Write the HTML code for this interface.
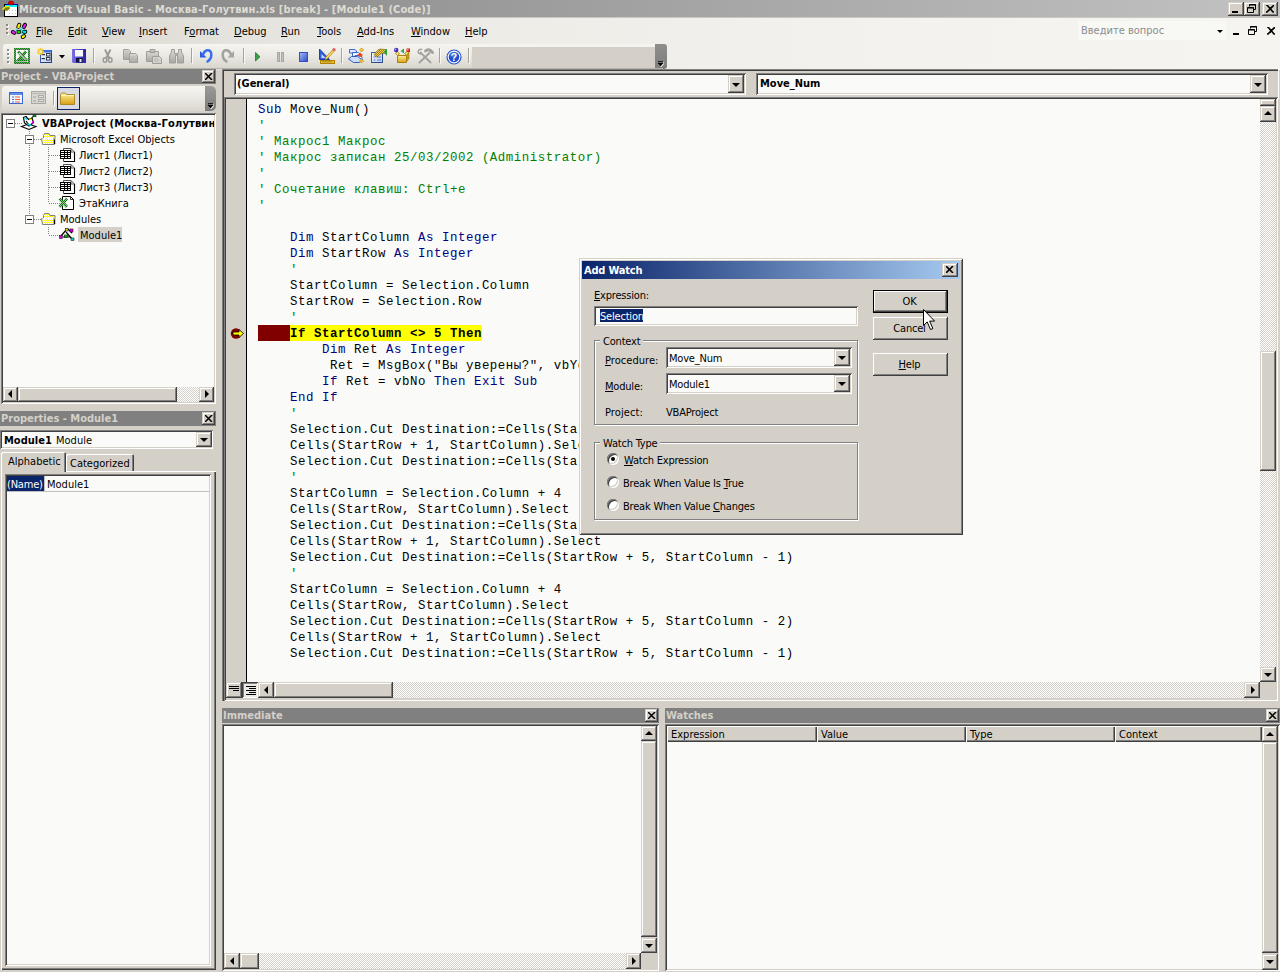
<!DOCTYPE html>
<html><head><meta charset="utf-8"><title>Microsoft Visual Basic</title>
<style>
*{box-sizing:border-box;margin:0;padding:0}
html,body{width:1280px;height:972px;overflow:hidden;background:#d4d0c8}
body{font:11px "DejaVu Sans Condensed","Liberation Sans",sans-serif;color:#000;position:relative;cursor:default}
.a{position:absolute}
.t{position:absolute;white-space:nowrap;line-height:13px;margin-top:1px}
.b{font-weight:bold}
u{text-decoration:underline;text-underline-offset:1px}
.sunken{box-shadow:inset 1px 1px #808080,inset -1px -1px #fff,inset 2px 2px #404040,inset -2px -2px #d4d0c8}
.raised{background:#d4d0c8;box-shadow:inset -1px -1px #404040,inset 1px 1px #d4d0c8,inset -2px -2px #808080,inset 2px 2px #fff}
.win{background:#fafbf8}
.dither{background-color:#e9e8e2;background-image:conic-gradient(#fff 25%,#d4d0c8 0 50%,#fff 0 75%,#d4d0c8 0);background-size:2px 2px}
.cap{background:#808080;color:#d4d0c8;font-weight:bold;height:15px}
.arr{position:absolute;width:0;height:0;border:4px solid transparent}
.code{font:12.4px/16px "Liberation Mono",monospace;letter-spacing:.56px;white-space:pre;position:absolute;left:258px;color:#000}
.k{color:#000080}.c{color:#008000}
.btn{background:#d4d0c8;box-shadow:inset -1px -1px #404040,inset 1px 1px #fff,inset -2px -2px #808080,inset 2px 2px #d4d0c8}
.hd{top:726px;height:16px;background:#d4d0c8;box-shadow:inset 1px 1px #fff,inset -1px -1px #404040,inset -2px -2px #808080}
.fr{border:1px solid #808080;box-shadow:1px 1px #fff,inset 1px 1px #fff}
.rd{width:12px;height:12px;border-radius:50%;background:#fff;box-shadow:inset 1px 1px 0 #808080,inset -1px -1px 0 #fff,inset 2px 2px 0 #404040,inset -2px -2px 0 #d4d0c8}
.rd i{position:absolute;left:4px;top:4px;width:4px;height:4px;border-radius:50%;background:#000}
</style></head><body>
<!--TITLE-->
<div class="a" style="left:0;top:0;width:1280px;height:18px;background:linear-gradient(90deg,#828282,#c2c2c2)"></div>
<div class="a" style="left:0;top:17px;width:1280px;height:1px;background:#c9c7c1"></div>
<svg class="a" style="left:2px;top:0" width="18" height="18" viewBox="0 0 18 18"><rect x="2.5" y="4.5" width="13" height="12" fill="#fff" stroke="#000"/><rect x="3" y="5" width="12" height="2" fill="#00ffff"/><rect x="4" y="4" width="12" height="1" fill="#0000c0"/><path d="M6 2.5l2-1.5 3 .5 1 2-2 1.5-3-.5z" fill="#e00000" stroke="#800000" stroke-width=".6"/><path d="M1 10l2-3 4-.5 1 2-3 2.5-2-.5z" fill="#808000"/><path d="M.5 9.5l2.500-2.500 4-.5" stroke="#ffff00" stroke-width="1.200" fill="none"/><g fill="#c0c0c0"><rect x="7" y="10" width="1" height="1"/><rect x="10" y="10" width="1" height="1"/><rect x="13" y="10" width="1" height="1"/><rect x="7" y="13" width="1" height="1"/><rect x="10" y="13" width="1" height="1"/><rect x="13" y="13" width="1" height="1"/></g></svg>
<div class="t b" style="left:19px;top:2px;color:#dedbd3;letter-spacing:.1px">Microsoft Visual Basic - Москва-Голутвин.xls [break] - [Module1 (Code)]</div>
<div class="a raised" style="left:1228px;top:2px;width:16px;height:14px"><div class="a" style="left:4px;top:9px;width:6px;height:2px;background:#000"></div></div>
<div class="a raised" style="left:1244px;top:2px;width:16px;height:14px"><svg class="a" style="left:3px;top:2px" width="10" height="10"><path d="M2.500 2.500V.5h6v2M2.500 1h6M8.500 .5v5h-2M.5 3.500h6v5h-6zM.5 4h6" stroke="#000" fill="none"/></svg></div>
<div class="a raised" style="left:1262px;top:2px;width:16px;height:14px"><svg class="a" style="left:4px;top:3px" width="8" height="8"><path d="M0 0l1 0 6 7h1M7 0h1l-7 7h-1" stroke="#000" stroke-width="1.600" fill="none"/></svg></div>
<!--MENU-->
<div class="a" style="left:0;top:18px;width:1280px;height:52px;background:linear-gradient(90deg,#d8d5cd 0,#e5e3dd 18%,#eeede8 42%,#f3f2ee 70%,#f5f4f1 100%)"></div>
<div class="a" style="left:7px;top:25px;width:2px;height:2px;background:#fff;box-shadow:0 4px #fff,0 8px #fff"></div><div class="a" style="left:6px;top:24px;width:2px;height:2px;background:#868682;box-shadow:0 4px #868682,0 8px #868682"></div>
<svg class="a" style="left:10px;top:22px" width="18" height="18" viewBox="10 22 18 18"><g stroke="#000" stroke-width="4" stroke-linecap="round"><path d="M18.300 27l1-2.200M23.800 27l1.200-2.200M12.800 32l1.500.8M22.800 37l1.300-.9M23.800 31.800h1.500"/></g><g stroke="#00d8e8" stroke-width="1.300" stroke-dasharray="1 .7"><path d="M18 28.500l-3.500 3M20 29l3 6.500M21 29.500l2.500 2M19 28h4"/></g><g stroke-width="2.200" stroke-linecap="round"><path d="M18.300 27l1-2.200M22.800 37l1.300-.9" stroke="#fff000"/><path d="M23.800 27l1.200-2.200M12.800 32l1.500.8" stroke="#e818e8"/><path d="M23.800 31.800h1.500" stroke="#00e0f0"/></g><rect x="17" y="30.500" width="3.500" height="3" fill="#00d800" stroke="#000" stroke-width=".7"/></svg>
<div class="t" style="left:36px;top:24px"><u>F</u>ile</div>
<div class="t" style="left:68px;top:24px"><u>E</u>dit</div>
<div class="t" style="left:102px;top:24px"><u>V</u>iew</div>
<div class="t" style="left:139px;top:24px"><u>I</u>nsert</div>
<div class="t" style="left:184px;top:24px">F<u>o</u>rmat</div>
<div class="t" style="left:234px;top:24px"><u>D</u>ebug</div>
<div class="t" style="left:281px;top:24px"><u>R</u>un</div>
<div class="t" style="left:317px;top:24px"><u>T</u>ools</div>
<div class="t" style="left:357px;top:24px"><u>A</u>dd-Ins</div>
<div class="t" style="left:411px;top:24px"><u>W</u>indow</div>
<div class="t" style="left:465px;top:24px"><u>H</u>elp</div>
<div class="a" style="left:1078px;top:21px;width:148px;height:19px;background:#f8f9f5"></div>
<div class="t" style="left:1081px;top:23px;color:#8c8c8c">Введите вопрос</div>
<div class="arr" style="left:1217px;top:30px;border-width:3px;border-top:3px solid #000"></div>
<div class="a" style="left:1233px;top:33px;width:6px;height:2px;background:#000"></div>
<svg class="a" style="left:1248px;top:26px" width="10" height="10"><path d="M2.500 2.500V.5h6v2M2.500 1h6M8.500 .5v5h-2M.5 3.500h6v5h-6zM.5 4h6" stroke="#000" fill="none"/></svg>
<svg class="a" style="left:1267px;top:27px" width="8" height="8"><path d="M0 0l1 0 6 7h1M7 0h1l-7 7h-1" stroke="#000" stroke-width="1.600" fill="none"/></svg>
<!--TOOLBAR-->
<div class="a" style="left:3px;top:44px;width:664px;height:24px;border-radius:3px 5px 5px 3px;background:linear-gradient(180deg,#f6f5f1 0,#eceae4 45%,#d9d6ce 100%)"></div>
<div class="a" style="left:472px;top:47px;width:186px;height:22px;background:#d4d0c8"></div>
<div class="a" style="left:655px;top:44px;width:12px;height:25px;border-radius:0 3px 3px 0;background:linear-gradient(180deg,#8e8e8c,#7e7e7c)"></div>
<div class="a" style="left:3px;top:68px;width:660px;height:1px;background:#b5b2aa"></div>
<svg class="a" style="left:0;top:44px" width="680" height="26" viewBox="0 0 680 26">
<defs>
<linearGradient id="gb" x1="0" y1="0" x2="1" y2="1"><stop offset="0" stop-color="#a8c0f8"/><stop offset="1" stop-color="#2848c8"/></linearGradient>
<linearGradient id="gy" x1="0" y1="0" x2="0" y2="1"><stop offset="0" stop-color="#fff0a0"/><stop offset="1" stop-color="#d8a010"/></linearGradient>
<pattern id="chk" width="2" height="2" patternUnits="userSpaceOnUse"><rect width="2" height="2" fill="#0a7f0a"/><rect x="1" width="1" height="1" fill="#7d9a7d"/><rect y="1" width="1" height="1" fill="#7d9a7d"/></pattern>
<pattern id="hc" width="2" height="2" patternUnits="userSpaceOnUse"><rect width="2" height="2" fill="#f4d040"/><rect x="1" width="1" height="1" fill="#a08020"/><rect y="1" width="1" height="1" fill="#a08020"/></pattern>
<linearGradient id="gw" x1="0" y1="0" x2="1" y2="1"><stop offset="0" stop-color="#fff"/><stop offset="1" stop-color="#b8cef4"/></linearGradient>
<linearGradient id="gs" x1="0" y1="0" x2="1" y2="0"><stop offset="0" stop-color="#7a70e8"/><stop offset=".5" stop-color="#5048c8"/><stop offset="1" stop-color="#2c249c"/></linearGradient>
<linearGradient id="gg" x1="0" y1="0" x2="0" y2="1"><stop offset="0" stop-color="#dcdad4"/><stop offset="1" stop-color="#a8a6a0"/></linearGradient>
</defs>
<g fill="#8e8e8a"><rect x="7" y="5" width="2" height="2"/><rect x="7" y="9" width="2" height="2"/><rect x="7" y="13" width="2" height="2"/><rect x="7" y="17" width="2" height="2"/></g>
<g fill="#fff"><rect x="8" y="6" width="2" height="2"/><rect x="8" y="10" width="2" height="2"/><rect x="8" y="14" width="2" height="2"/><rect x="8" y="18" width="2" height="2"/></g>
<g fill="#8e8e8a"><rect x="7" y="5" width="2" height="2"/><rect x="7" y="9" width="2" height="2"/><rect x="7" y="13" width="2" height="2"/><rect x="7" y="17" width="2" height="2"/></g>
<!-- excel -->
<rect x="15" y="5" width="14" height="14" fill="#f6f8f4" stroke="url(#chk)" stroke-width="2"/>
<path d="M18 7.500l8 8.500M26 7.500l-7.500 8.500h9" stroke="url(#chk)" stroke-width="2.800" fill="none"/>
<path d="M19 9l6.500 7" stroke="#f6f8f4" stroke-width=".9"/>
<!-- userform -->
<rect x="40.500" y="6.500" width="11" height="12" fill="url(#gw)" stroke="#3a5ca8"/>
<path d="M41 18.500h10.500v-12" stroke="#24407c" fill="none"/>
<rect x="41" y="6" width="10.500" height="2.500" fill="#3f72e0"/>
<rect x="41.500" y="10" width="3.500" height="1.200" fill="#283040"/><rect x="46.500" y="9.500" width="3.500" height="2.500" fill="#f4f6fa" stroke="#303844" stroke-width="1"/>
<rect x="41.500" y="14" width="3.500" height="1.200" fill="#283040"/><rect x="46.500" y="13.500" width="3.500" height="2.500" fill="#f4f6fa" stroke="#303844" stroke-width="1"/>
<path d="M40.500 4v7M37 7.500h7M38 5l5 5M43 5l-5 5" stroke="#f2c832" stroke-width="1.500"/><rect x="39.500" y="6.500" width="2" height="2" fill="#fffbe0"/>
<path d="M59 11h6l-3 3.500z" fill="#000"/>
<!-- save -->
<path d="M72 5h14v14h-13l-1-1z" fill="url(#gs)"/>
<rect x="75" y="6" width="8" height="6.500" fill="#f6f8fc"/><rect x="76" y="14" width="6.500" height="4.500" fill="#14143c"/><rect x="79.500" y="15" width="2" height="3" fill="#e8ecf8"/><rect x="84" y="6.500" width="1" height="1.500" fill="#201868"/>
<path d="M93.500 4v15M191.500 4v15M243.500 4v15M341.500 4v15M439.500 4v15M468.500 4v15" stroke="#a6a39b"/>
<path d="M94.500 5v15M192.500 5v15M244.500 5v15M342.500 5v15M440.500 5v15M469.500 5v15" stroke="#fff" opacity=".8"/>
<!-- cut -->
<g stroke="#9c9a96" fill="none"><path d="M105 5.500l4.500 9M110.500 5.500l-4.500 9" stroke-width="1.900"/><ellipse cx="105" cy="16" rx="1.800" ry="2.300" stroke-width="1.500"/><ellipse cx="110.200" cy="16" rx="1.800" ry="2.300" stroke-width="1.500"/></g>
<!-- copy -->
<g fill="url(#gg)" stroke="#a09e98"><path d="M123.500 5.500h5l2 2v8h-7z"/><path d="M129.500 9.500h6l2 2v7h-8z"/></g>
<g stroke="#b8b6b0" stroke-width=".8"><path d="M125 8h3M125 10h4M125 12h3M131 13h4M131 15h5M131 17h4"/></g>
<!-- paste -->
<g fill="url(#gg)" stroke="#a09e98"><path d="M146.500 7.500h12v10h-12z"/><path d="M150 5.500h5v3h-5z"/><path d="M152.500 12.500h7l2 2v5h-9z" fill="#d4d2cc"/></g>
<path d="M154 15h4M154 17h5" stroke="#b0aea8" stroke-width=".8"/>
<!-- find -->
<g fill="url(#gg)" stroke="#a09e98"><path d="M169.500 12l2-4v-2.500h3v2.500l1 3v8h-6zM177.500 11l1-3v-2.500h3v2.500l2 4v7h-6z"/><rect x="175" y="9" width="3" height="3" stroke="none" fill="#a8a6a0"/></g>
<!-- undo -->
<path d="M200 7v6.500h6.500z" fill="#2a5ce0"/><path d="M203 10.500C204.500 6 209.500 4.500 211 8.500 212 12 210.500 15.500 207.500 17.500" stroke="#3a70ee" stroke-width="2.500" fill="none" stroke-linecap="round"/>
<!-- redo -->
<path d="M234 7v6.500h-6.500z" fill="#a8a6a2"/><path d="M231 10.500C229.500 6 224.500 4.500 223 8.500 222 12 223.500 15.500 226.500 17.500" stroke="#a4a29e" stroke-width="2.500" fill="none" stroke-linecap="round"/>
<!-- run -->
<path d="M255.500 8.500v8.500l4.500-4.250z" fill="#38a048" stroke="#207830" stroke-width=".8"/>
<!-- pause -->
<rect x="277.500" y="8.500" width="2" height="9" fill="#c4c2bc" stroke="#a8a6a0"/><rect x="281.500" y="8.500" width="2" height="9" fill="#c4c2bc" stroke="#a8a6a0"/>
<!-- stop -->
<rect x="299.500" y="8.500" width="8" height="9" fill="url(#gb)" stroke="#3050c8"/>
<!-- design -->
<path d="M319.500 5v10.500h10z" fill="#3060d8" stroke="#2040a8"/><path d="M321.500 10v4h4z" fill="#c8d8f8"/>
<rect x="320.500" y="16.500" width="14" height="3" fill="#f0c030" stroke="#b08000"/><path d="M323 17v1.500M325 17v1.500M327 17v1.500M329 17v1.500M331 17v1.500" stroke="#705000" stroke-width=".7"/>
<path d="M325.500 13.500l8-8.500 1.500 1.500-8 8.500-2 .5z" fill="#f8d860" stroke="#a07818" stroke-width=".7"/><circle cx="334" cy="5.500" r="1.600" fill="#e06060"/>
<!-- project explorer -->
<g stroke="#2a5cc8" stroke-width=".9"><path d="M349.500 5.500h5.500l1.500 1.500v2h-7z" fill="#dce8ff"/><path d="M352.500 8.500h6l1.500 1.500v2.500h-7.500z" fill="#eef4ff"/><path d="M355 11.500h5.500l1.500 1.500v3h-7z" fill="#fff"/><path d="M348.500 15l3-2.500h6l5 3.500-3 2.500h-6z" fill="#c8dcfc" stroke="#2850b0"/></g>
<path d="M359.500 6l2-2 2 2-2 2zM359.500 17l2-2 2 2-2 2z" fill="#f8c830" stroke="#c08c10" stroke-width=".7"/><path d="M357.500 11l2.500-2 2.500 2-2.500 2z" fill="#f04020" stroke="#c03010" stroke-width=".5"/>
<!-- properties -->
<rect x="371.500" y="8.500" width="11" height="10" fill="url(#gw)" stroke="#3a60b0"/><path d="M372 18.500h10.500v-9" stroke="#284888" fill="none"/><path d="M373.500 13h2M377 13h4M373.500 16h2M377 16h4" stroke="#4c78c8"/>
<path d="M374 10.500l4-4.500 2-1 5 .5 1 2-1.500 2-4.500.5-2 2.500-2 .5z" fill="url(#hc)" stroke="#8c7018" stroke-width=".7"/><path d="M385.500 5h1.500v7l-3-3.500z" fill="#28a048"/>
<!-- object browser -->
<path d="M397.500 11.500h9v7h-9z" fill="url(#gy)" stroke="#a88010"/><path d="M397.500 11.500l-2-2 2-2 2 2.500zM406.500 11.500l2.500-3 -1.500-1-3 2z" fill="#f8e070" stroke="#a88010" stroke-width=".8"/><path d="M406.500 11.500l2.500-3v6l-2.500 3.500z" fill="#c89818" stroke="#a88010" stroke-width=".6"/>
<circle cx="396.200" cy="6" r="2.200" fill="#3828b8"/><circle cx="395.600" cy="5.400" r=".9" fill="#b8b0ff"/><path d="M400.500 7l3.500-2.500v5z" fill="#30a850"/><rect x="406.500" y="4.500" width="3.500" height="3.500" fill="#c82818"/><rect x="407" y="5" width="1.500" height="1.500" fill="#ff9080"/>
<!-- toolbox -->
<g stroke="#a4a29c" fill="none" stroke-linecap="round"><path d="M420.500 8.500l10 10" stroke-width="2" stroke-dasharray="1.500 .4"/><path d="M429.500 9l-10 9.500" stroke-width="2" stroke-dasharray="1.500 .4"/><path d="M418 7.500a2.600 2.600 0 0 0 3.800 2.200M421.500 5.500a2.600 2.600 0 0 0-3 1" stroke-width="1.500"/><path d="M425.500 7c2-2 4.500-2 7 1.500" stroke-width="3"/></g>
<!-- help -->
<circle cx="454" cy="13" r="7" fill="#fff" stroke="#2858d0" stroke-width="1.200"/><circle cx="454" cy="13" r="5.300" fill="#2050d0"/><ellipse cx="453" cy="10.500" rx="3.500" ry="2.500" fill="#5888f0" opacity=".7"/>
<text x="454" y="17" font-family="Liberation Sans,sans-serif" font-size="10.500" font-weight="bold" fill="#fff" text-anchor="middle">?</text>
<!-- chevron -->
<path d="M658 17.500h5M658 19h5l-2.500 3z" stroke="#fff" fill="#fff" stroke-width=".8" transform="translate(.7 .7)"/>
<path d="M658 17.500h5M658 19h5l-2.500 3z" stroke="#000" fill="#000" stroke-width=".8"/>
</svg>
<!--LEFT-->
<div class="a cap" style="left:0;top:69px;width:216px"><div class="t" style="left:1px;top:0">Project - VBAProject</div></div>
<div class="a raised" style="left:202px;top:70px;width:13px;height:13px"><svg class="a" style="left:3px;top:3px" width="8" height="7"><path d="M0 0l7 7M7 0l-7 7" stroke="#000" stroke-width="1.500" fill="none"/></svg></div>
<div class="a" style="left:2px;top:86px;width:214px;height:25px;border-radius:3px 5px 5px 3px;background:linear-gradient(180deg,#f6f5f1 0,#eceae4 45%,#d9d6ce 100%)"></div>
<div class="a" style="left:205px;top:86px;width:11px;height:25px;border-radius:0 5px 5px 0;background:linear-gradient(180deg,#9a9a98,#7c7c7a)"></div>
<div class="a" style="left:57px;top:87px;width:23px;height:23px;background:#d8dae4;border:1px solid #0a246a"></div>
<svg class="a" style="left:0;top:86px" width="216" height="26" viewBox="0 0 216 26">
<rect x="9.500" y="6.500" width="13" height="11" fill="#f4f6ff" stroke="#3868d0"/><rect x="10" y="7" width="12" height="2" fill="#6090e8"/>
<path d="M12 11h2M12 13.500h2M12 16h2" stroke="#4070d0"/><path d="M15 11h5M15 13.500h5M15 16h5" stroke="#f06030"/>
<rect x="31.500" y="5.500" width="14" height="12" fill="#d8d6d0" stroke="#aaa8a2"/><path d="M32 7.500h13" stroke="#b8b6b0"/><path d="M33 11h3M33 15h3" stroke="#a09e98"/><rect x="38.500" y="9.500" width="5" height="2" fill="#e4e2dc" stroke="#a09e98" stroke-width=".8"/><rect x="38.500" y="13.500" width="5" height="2" fill="#e4e2dc" stroke="#a09e98" stroke-width=".8"/>
<path d="M53.500 5v14" stroke="#a6a39b"/><path d="M54.500 6v14" stroke="#fff"/>
<path d="M60.500 8.500l1-1.500h4l1 1.500h8v10h-14z" fill="url(#gy)" stroke="#a07810" stroke-width=".8"/><path d="M61 9.500h13" stroke="#fff8c8" stroke-width=".8"/>
<path d="M208 17.500h5M208 19h5l-2.500 3z" stroke="#fff" fill="#fff" stroke-width=".8" transform="translate(.7 .7)"/>
<path d="M208 17.500h5M208 19h5l-2.500 3z" stroke="#000" fill="#000" stroke-width=".8"/>
</svg>
<div class="a win sunken" style="left:1px;top:113px;width:215px;height:291px"></div>
<div class="a" style="left:78px;top:227px;width:44px;height:15px;background:#d4d0c8"></div>
<svg class="a" style="left:0;top:113px" width="216" height="140" viewBox="0 113 216 140"><defs><pattern id="gc" width="2" height="2" patternUnits="userSpaceOnUse"><rect width="2" height="2" fill="#0a7f0a"/><rect x="1" width="1" height="1" fill="#9ab89a"/><rect y="1" width="1" height="1" fill="#9ab89a"/></pattern><pattern id="yc" width="2" height="2" patternUnits="userSpaceOnUse"><rect width="2" height="2" fill="#ffff00"/><rect x="1" width="1" height="1" fill="#fff"/><rect y="1" width="1" height="1" fill="#fff"/></pattern></defs>
<g stroke="#808080" stroke-dasharray="1 1" fill="none"><path d="M15 123.500h7M29.500 131v88M34 139.500h7M34 219.500h7M48.500 147v56M48.500 227v8M49 155.500h11M49 171.500h11M49 187.500h11M49 203.500h11M49 235.500h11"/></g>
<g fill="#fff" stroke="#808080"><rect x="6.500" y="119.500" width="8" height="8"/><rect x="25.500" y="135.500" width="8" height="8"/><rect x="25.500" y="215.500" width="8" height="8"/></g>
<path d="M8 123.500h5M27 139.500h5M27 219.500h5" stroke="#000"/>
<!-- project icon -->
<g><path d="M21.500 126.500l7-2.500 7.500 2.500-7 3z" fill="#fff" stroke="#000" stroke-width="1.100"/><path d="M23.500 117.500l2.500-1 2.500 3 3.500-1.500 1.500 4.500-4.500 3.500-4.500-3z" fill="#fff" stroke="#000" stroke-width="1.200"/><path d="M26 121l3 4" stroke="#000" stroke-width="1.200"/><path d="M24.500 117.500l2.500 2M27.500 124l3.500 1.500" stroke="#00e0e8" stroke-width="1.600"/><rect x="29.500" y="118.500" width="2.500" height="1.500" fill="#f0f000"/><rect x="32" y="121" width="1.500" height="2.500" fill="#f000f0"/><path d="M31.500 118.500l2-2.500" stroke="#000" stroke-width="1"/><rect x="33" y="115" width="3" height="1.800" fill="#00d000" stroke="#000" stroke-width=".5"/></g>
<!-- folders -->
<g id="fo"><path d="M43.500 138.500v-3l1-2h4.500l1 2h5v3.500" fill="url(#yc)" stroke="#808080"/><path d="M41.500 138.500h12.500l.5 6h-12z" fill="url(#yc)" stroke="#808080"/><path d="M42.500 138.500h11" stroke="#fff"/><path d="M54.500 139.500v4.500" stroke="#000" stroke-width="1.400"/></g>
<g transform="translate(0 80)"><path d="M43.500 138.500v-3l1-2h4.500l1 2h5v3.500" fill="url(#yc)" stroke="#808080"/><path d="M41.500 138.500h12.500l.5 6h-12z" fill="url(#yc)" stroke="#808080"/><path d="M42.500 138.500h11" stroke="#fff"/><path d="M54.500 139.500v4.500" stroke="#000" stroke-width="1.400"/></g>
<!-- sheets -->
<g id="sh"><path d="M63.500 148.500h7.500l3.500 3.500v9.500h-11z" fill="#fff" stroke="#404040" stroke-width=".9"/><path d="M74.500 152v9.500h-10.500" fill="none" stroke="#000" stroke-width="1.100"/><path d="M71 148.500v3.500h3.500" fill="none" stroke="#404040" stroke-width=".8"/><rect x="60" y="150" width="11" height="9" fill="#000"/><g fill="#fff"><rect x="61" y="151" width="3" height="1"/><rect x="65" y="151" width="2" height="1"/><rect x="68" y="151" width="2" height="1"/><rect x="61" y="153" width="3" height="1"/><rect x="65" y="153" width="2" height="1"/><rect x="68" y="153" width="2" height="1"/><rect x="61" y="155" width="3" height="1"/><rect x="65" y="155" width="2" height="1"/><rect x="68" y="155" width="2" height="1"/><rect x="61" y="157" width="3" height="1"/><rect x="65" y="157" width="2" height="1"/><rect x="68" y="157" width="2" height="1"/></g></g>
<g transform="translate(0 16)"><path d="M63.500 148.500h7.500l3.500 3.500v9.500h-11z" fill="#fff" stroke="#404040" stroke-width=".9"/><path d="M74.500 152v9.500h-10.500" fill="none" stroke="#000" stroke-width="1.100"/><path d="M71 148.500v3.500h3.500" fill="none" stroke="#404040" stroke-width=".8"/><rect x="60" y="150" width="11" height="9" fill="#000"/><g fill="#fff"><rect x="61" y="151" width="3" height="1"/><rect x="65" y="151" width="2" height="1"/><rect x="68" y="151" width="2" height="1"/><rect x="61" y="153" width="3" height="1"/><rect x="65" y="153" width="2" height="1"/><rect x="68" y="153" width="2" height="1"/><rect x="61" y="155" width="3" height="1"/><rect x="65" y="155" width="2" height="1"/><rect x="68" y="155" width="2" height="1"/><rect x="61" y="157" width="3" height="1"/><rect x="65" y="157" width="2" height="1"/><rect x="68" y="157" width="2" height="1"/></g></g><g transform="translate(0 32)"><path d="M63.500 148.500h7.500l3.500 3.500v9.500h-11z" fill="#fff" stroke="#404040" stroke-width=".9"/><path d="M74.500 152v9.500h-10.500" fill="none" stroke="#000" stroke-width="1.100"/><path d="M71 148.500v3.500h3.500" fill="none" stroke="#404040" stroke-width=".8"/><rect x="60" y="150" width="11" height="9" fill="#000"/><g fill="#fff"><rect x="61" y="151" width="3" height="1"/><rect x="65" y="151" width="2" height="1"/><rect x="68" y="151" width="2" height="1"/><rect x="61" y="153" width="3" height="1"/><rect x="65" y="153" width="2" height="1"/><rect x="68" y="153" width="2" height="1"/><rect x="61" y="155" width="3" height="1"/><rect x="65" y="155" width="2" height="1"/><rect x="68" y="155" width="2" height="1"/><rect x="61" y="157" width="3" height="1"/><rect x="65" y="157" width="2" height="1"/><rect x="68" y="157" width="2" height="1"/></g></g>
<!-- workbook -->
<path d="M62.500 196.500h8l3 3v10h-11z" fill="#fff" stroke="#000"/><path d="M70.500 196.500v3h3" fill="none" stroke="#000" stroke-width=".8"/><path d="M59.500 198.500l7.500 8.500M67 198.500l-7.500 8.500" stroke="url(#gc)" stroke-width="2.800"/>
<!-- module -->
<g><path d="M61 236l6-7M66 232l6 7M63 237h8M68 229l4 4" stroke="#000" stroke-width="1.200"/><rect x="65.500" y="228.500" width="2.500" height="2.500" fill="#e8e800" stroke="#000" stroke-width=".5"/><rect x="70" y="229" width="3" height="3" fill="#e000e0" stroke="#000" stroke-width=".5"/><rect x="59.500" y="235.500" width="3" height="3" fill="#e000e0" stroke="#000" stroke-width=".5"/><rect x="64.500" y="235" width="3" height="2.500" fill="#00c000" stroke="#000" stroke-width=".5"/><rect x="71" y="238" width="3" height="2.500" fill="#00d8d8" stroke="#000" stroke-width=".5"/></g>
</svg>
<div class="t b" style="left:42px;top:116px;width:172px;overflow:hidden;letter-spacing:.15px">VBAProject (Москва-Голутвин.xls)</div>
<div class="t" style="left:60px;top:132px">Microsoft Excel Objects</div>
<div class="t" style="left:79px;top:148px">Лист1 (Лист1)</div>
<div class="t" style="left:79px;top:164px">Лист2 (Лист2)</div>
<div class="t" style="left:79px;top:180px">Лист3 (Лист3)</div>
<div class="t" style="left:79px;top:196px">ЭтаКнига</div>
<div class="t" style="left:60px;top:212px">Modules</div>
<div class="t" style="left:80px;top:228px">Module1</div>
<!-- tree hscroll -->
<div class="a dither" style="left:3px;top:387px;width:211px;height:15px"></div>
<div class="a raised" style="left:3px;top:387px;width:15px;height:15px"><div class="arr" style="left:1px;top:3px;border-right:4px solid #000"></div></div>
<div class="a raised" style="left:18px;top:387px;width:159px;height:15px"></div>
<div class="a raised" style="left:199px;top:387px;width:15px;height:15px"><div class="arr" style="left:6px;top:3px;border-left:4px solid #000"></div></div>
<!-- properties -->
<div class="a cap" style="left:0;top:411px;width:216px"><div class="t" style="left:1px;top:0">Properties - Module1</div></div>
<div class="a raised" style="left:202px;top:412px;width:13px;height:13px"><svg class="a" style="left:3px;top:3px" width="8" height="7"><path d="M0 0l7 7M7 0l-7 7" stroke="#000" stroke-width="1.500" fill="none"/></svg></div>
<div class="a win sunken" style="left:0;top:430px;width:213px;height:19px"></div>
<div class="t b" style="left:4px;top:433px">Module1</div><div class="t" style="left:56px;top:433px">Module</div>
<div class="a raised" style="left:196px;top:432px;width:16px;height:15px"><div class="arr" style="left:4px;top:6px;border-top:4px solid #000"></div></div>
<!-- tabs -->
<div class="a" style="left:1px;top:471px;width:215px;height:499px;box-shadow:inset 1px 1px #fff,inset -1px -1px #404040,inset -2px -2px #808080"></div>
<div class="a" style="left:66px;top:454px;width:68px;height:17px;border-radius:2px 2px 0 0;box-shadow:inset 1px 1px #fff,inset -1px 0 #404040,inset -2px 0 #808080"></div>
<div class="a" style="left:1px;top:452px;width:65px;height:20px;background:#d4d0c8;border-radius:2px 2px 0 0;box-shadow:inset 1px 1px #fff,inset -1px 0 #404040,inset -2px 0 #808080"></div>
<div class="t" style="left:8px;top:454px">Alphabetic</div>
<div class="t" style="left:70px;top:456px">Categorized</div>
<div class="a win sunken" style="left:5px;top:474px;width:206px;height:492px"></div>
<div class="a" style="left:7px;top:476px;width:37px;height:15px;background:#0a246a"></div>
<div class="a" style="left:7px;top:491px;width:202px;height:1px;background:#c0c0c0"></div>
<div class="a" style="left:44px;top:476px;width:1px;height:15px;background:#c0c0c0"></div>
<div class="t" style="left:7px;top:477px;color:#fff;letter-spacing:-.2px">(Name)</div>
<div class="t" style="left:47px;top:477px">Module1</div>
<!--CODE-->
<div class="a" style="left:222px;top:69px;width:1057px;height:632px;box-shadow:inset 1px 1px #808080,inset 2px 2px #404040"></div><div class="a" style="left:1278px;top:69px;width:1px;height:30px;background:#fff"></div>
<div class="a win sunken" style="left:234px;top:73px;width:512px;height:22px"></div>
<div class="t b" style="left:237px;top:76px">(General)</div>
<div class="a raised" style="left:728px;top:75px;width:16px;height:18px"><div class="arr" style="left:4px;top:8px;border-top:4px solid #000"></div></div>
<div class="a win sunken" style="left:756px;top:73px;width:512px;height:22px"></div>
<div class="t b" style="left:760px;top:76px">Move_Num</div>
<div class="a raised" style="left:1250px;top:75px;width:16px;height:18px"><div class="arr" style="left:4px;top:8px;border-top:4px solid #000"></div></div>
<div class="a win sunken" style="left:224px;top:97px;width:1054px;height:604px"></div>
<div class="a" style="left:226px;top:99px;width:20px;height:583px;background:#d4d0c8"></div>
<div class="a" style="left:246px;top:99px;width:1px;height:583px;background:#000"></div>
<div class="a" style="left:258px;top:325px;width:32px;height:16px;background:#800000"></div>
<div class="a" style="left:290px;top:325px;width:192px;height:16px;background:#ffff00"></div>
<svg class="a" style="left:229px;top:326px" width="17" height="15" viewBox="0 0 17 15"><circle cx="7" cy="7.500" r="5.200" fill="#800000"/><path d="M4 6h6v-2.500l4.500 4-4.500 4v-2.500h-6z" fill="#ffff00" stroke="#000" stroke-width=".8"/></svg>
<div class="code" style="top:102px"><span class="k">Sub</span> Move_Num()
<span class="c">&#x27;</span>
<span class="c">&#x27; Макрос1 Макрос</span>
<span class="c">&#x27; Макрос записан 25/03/2002 (Administrator)</span>
<span class="c">&#x27;</span>
<span class="c">&#x27; Сочетание клавиш: Ctrl+e</span>
<span class="c">&#x27;</span>

    <span class="k">Dim</span> StartColumn <span class="k">As Integer</span>
    <span class="k">Dim</span> StartRow <span class="k">As Integer</span>
    <span class="c">&#x27;</span>
    StartColumn = Selection.Column
    StartRow = Selection.Row
    <span class="c">&#x27;</span>
    <b>If StartColumn &lt;&gt; 5 Then</b>
        <span class="k">Dim</span> Ret <span class="k">As Integer</span>
         Ret = MsgBox(&quot;Вы уверены?&quot;, vbYesNo + vbQuestion)
        <span class="k">If</span> Ret = vbNo <span class="k">Then Exit Sub</span>
    <span class="k">End If</span>
    <span class="c">&#x27;</span>
    Selection.Cut Destination:=Cells(StartRow + 5, StartColumn - 2)
    Cells(StartRow + 1, StartColumn).Select
    Selection.Cut Destination:=Cells(StartRow + 5, StartColumn - 1)
    <span class="c">&#x27;</span>
    StartColumn = Selection.Column + 4
    Cells(StartRow, StartColumn).Select
    Selection.Cut Destination:=Cells(StartRow + 5, StartColumn - 2)
    Cells(StartRow + 1, StartColumn).Select
    Selection.Cut Destination:=Cells(StartRow + 5, StartColumn - 1)
    <span class="c">&#x27;</span>
    StartColumn = Selection.Column + 4
    Cells(StartRow, StartColumn).Select
    Selection.Cut Destination:=Cells(StartRow + 5, StartColumn - 2)
    Cells(StartRow + 1, StartColumn).Select
    Selection.Cut Destination:=Cells(StartRow + 5, StartColumn - 1)</div>
<!-- vscroll -->
<div class="a dither" style="left:1260px;top:99px;width:16px;height:583px"></div>
<div class="a raised" style="left:1260px;top:99px;width:16px;height:7px"></div>
<div class="a raised" style="left:1260px;top:106px;width:16px;height:16px"><div class="arr" style="left:4px;top:1px;border-bottom:4px solid #000"></div></div>
<div class="a raised" style="left:1260px;top:351px;width:16px;height:120px"></div>
<div class="a raised" style="left:1260px;top:667px;width:16px;height:15px"><div class="arr" style="left:4px;top:6px;border-top:4px solid #000"></div></div>
<!-- hscroll -->
<div class="a dither" style="left:226px;top:682px;width:1034px;height:16px"></div>
<div class="a" style="left:1260px;top:682px;width:16px;height:17px;background:#d4d0c8"></div>
<div class="a" style="left:226px;top:698px;width:1050px;height:1px;background:#d4d0c8"></div>
<div class="a raised" style="left:226px;top:682px;width:16px;height:16px"><div class="a" style="left:3px;top:4px;width:10px;height:1px;background:#000;box-shadow:0 2px #000"></div><div class="a" style="left:7px;top:8px;width:6px;height:1px;background:#000"></div></div>
<div class="a" style="left:242px;top:682px;width:16px;height:16px;background:#eceae4;box-shadow:inset 1px 1px #404040,inset -1px -1px #fff,inset 2px 2px #808080"><div class="a" style="left:4px;top:4px;width:10px;height:1px;background:#000;box-shadow:0 4px #000,0 8px #000"></div><div class="a" style="left:7px;top:6px;width:7px;height:1px;background:#000;box-shadow:0 4px #000"></div></div>
<div class="a raised" style="left:258px;top:682px;width:16px;height:16px"><div class="arr" style="left:2px;top:4px;border-right:4px solid #000"></div></div>
<div class="a raised" style="left:274px;top:682px;width:119px;height:16px"></div>
<div class="a raised" style="left:1244px;top:682px;width:16px;height:16px"><div class="arr" style="left:7px;top:4px;border-left:4px solid #000"></div></div>
<!--BOTTOM-->
<div class="a cap" style="left:222px;top:708px;width:437px"><div class="t" style="left:1px;top:0">Immediate</div></div>
<div class="a raised" style="left:645px;top:709px;width:13px;height:13px"><svg class="a" style="left:3px;top:3px" width="8" height="7"><path d="M0 0l7 7M7 0l-7 7" stroke="#000" stroke-width="1.500" fill="none"/></svg></div>
<div class="a win sunken" style="left:222px;top:724px;width:437px;height:247px"></div>
<div class="a" style="left:641px;top:726px;width:16px;height:243px;background:#d4d0c8"></div>
<div class="a raised" style="left:641px;top:726px;width:16px;height:15px"><div class="arr" style="left:4px;top:1px;border-bottom:4px solid #000"></div></div>
<div class="a raised" style="left:641px;top:741px;width:16px;height:196px"></div>
<div class="a raised" style="left:641px;top:938px;width:16px;height:15px"><div class="arr" style="left:4px;top:6px;border-top:4px solid #000"></div></div>
<div class="a dither" style="left:224px;top:953px;width:417px;height:16px"></div>
<div class="a raised" style="left:224px;top:953px;width:16px;height:16px"><div class="arr" style="left:2px;top:4px;border-right:4px solid #000"></div></div>
<div class="a raised" style="left:240px;top:953px;width:19px;height:16px"></div>
<div class="a raised" style="left:626px;top:953px;width:15px;height:16px"><div class="arr" style="left:6px;top:4px;border-left:4px solid #000"></div></div>
<!-- watches -->
<div class="a cap" style="left:665px;top:708px;width:615px"><div class="t" style="left:1px;top:0">Watches</div></div>
<div class="a raised" style="left:1266px;top:709px;width:13px;height:13px"><svg class="a" style="left:3px;top:3px" width="8" height="7"><path d="M0 0l7 7M7 0l-7 7" stroke="#000" stroke-width="1.500" fill="none"/></svg></div>
<div class="a win sunken" style="left:665px;top:724px;width:615px;height:247px"></div>
<div class="a hd" style="left:667px;width:150px"><div class="t" style="left:4px;top:1px">Expression</div></div>
<div class="a hd" style="left:817px;width:149px"><div class="t" style="left:4px;top:1px">Value</div></div>
<div class="a hd" style="left:966px;width:149px"><div class="t" style="left:4px;top:1px">Type</div></div>
<div class="a hd" style="left:1115px;width:147px"><div class="t" style="left:4px;top:1px">Context</div></div>
<div class="a" style="left:1262px;top:726px;width:16px;height:243px;background:#d4d0c8"></div>
<div class="a raised" style="left:1262px;top:726px;width:16px;height:16px"><div class="arr" style="left:4px;top:2px;border-bottom:4px solid #000"></div></div>
<div class="a raised" style="left:1262px;top:742px;width:16px;height:211px"></div>
<div class="a raised" style="left:1262px;top:954px;width:16px;height:16px"><div class="arr" style="left:4px;top:6px;border-top:4px solid #000"></div></div>
<!--DIALOG-->
<div style="letter-spacing:-.2px">
<div class="a" style="left:579px;top:258px;width:384px;height:277px;background:#d4d0c8;box-shadow:inset 1px 1px #d4d0c8,inset -1px -1px #404040,inset 2px 2px #fff,inset -2px -2px #808080"></div>
<div class="a" style="left:582px;top:261px;width:378px;height:18px;background:linear-gradient(90deg,#0a246a,#a6caf0)"></div>
<div class="t b" style="left:584px;top:263px;color:#fff;font-size:11px">Add Watch</div>
<div class="a raised" style="left:942px;top:263px;width:16px;height:14px"><svg class="a" style="left:4px;top:3px" width="8" height="7"><path d="M0 0l7 7M7 0l-7 7" stroke="#000" stroke-width="1.600" fill="none"/></svg></div>
<div class="t" style="left:594px;top:288px"><u>E</u>xpression:</div>
<div class="a win sunken" style="left:594px;top:306px;width:264px;height:20px"></div>
<div class="a" style="left:600px;top:309px;width:43px;height:13px;background:#0a246a"></div>
<div class="t" style="left:600px;top:309px;color:#fff">Selection</div>
<!-- context frame -->
<div class="a fr" style="left:594px;top:340px;width:264px;height:85px"></div>
<div class="t" style="left:600px;top:334px;background:#d4d0c8;padding:0 3px">Context</div>
<div class="t" style="left:605px;top:353px;letter-spacing:.05px"><u>P</u>rocedure:</div>
<div class="a win sunken" style="left:666px;top:347px;width:186px;height:21px"></div>
<div class="t" style="left:669px;top:351px">Move_Num</div>
<div class="a raised" style="left:834px;top:349px;width:16px;height:17px"><div class="arr" style="left:4px;top:7px;border-top:4px solid #000"></div></div>
<div class="t" style="left:605px;top:379px"><u>M</u>odule:</div>
<div class="a win sunken" style="left:666px;top:373px;width:186px;height:21px"></div>
<div class="t" style="left:669px;top:377px">Module1</div>
<div class="a raised" style="left:834px;top:375px;width:16px;height:17px"><div class="arr" style="left:4px;top:7px;border-top:4px solid #000"></div></div>
<div class="t" style="left:605px;top:405px;letter-spacing:.1px">Project:</div>
<div class="t" style="left:666px;top:405px">VBAProject</div>
<!-- watch type -->
<div class="a fr" style="left:594px;top:442px;width:264px;height:78px"></div>
<div class="t" style="left:600px;top:436px;background:#d4d0c8;padding:0 3px">Watch Type</div>
<div class="a rd" style="left:607px;top:453px"><i></i></div>
<div class="a rd" style="left:607px;top:476px"></div>
<div class="a rd" style="left:607px;top:499px"></div>
<div class="t" style="left:624px;top:453px"><u>W</u>atch Expression</div>
<div class="t" style="left:623px;top:476px">Break When Value Is <u>T</u>rue</div>
<div class="t" style="left:623px;top:499px">Break When Value <u>C</u>hanges</div>
<!-- buttons -->
<div class="a" style="left:873px;top:290px;width:75px;height:23px;background:#000"></div>
<div class="a btn" style="left:874px;top:291px;width:73px;height:21px"></div>
<div class="t" style="left:872px;top:294px;width:75px;text-align:center">OK</div>
<div class="a btn" style="left:873px;top:317px;width:75px;height:23px"></div>
<div class="t" style="left:872px;top:321px;width:75px;text-align:center">Cancel</div>
<div class="a btn" style="left:873px;top:353px;width:75px;height:23px"></div>
<div class="t" style="left:872px;top:357px;width:75px;text-align:center"><u>H</u>elp</div>
<svg class="a" style="left:922px;top:308px" width="14" height="22" viewBox="0 0 14 22"><path d="M1.500 1.500v16l3.700-3.600 3.300 7.600 2.400-1-3.300-7.400h5z" fill="#fff" stroke="#000" stroke-width="1"/></svg>
</div>
</body></html>
